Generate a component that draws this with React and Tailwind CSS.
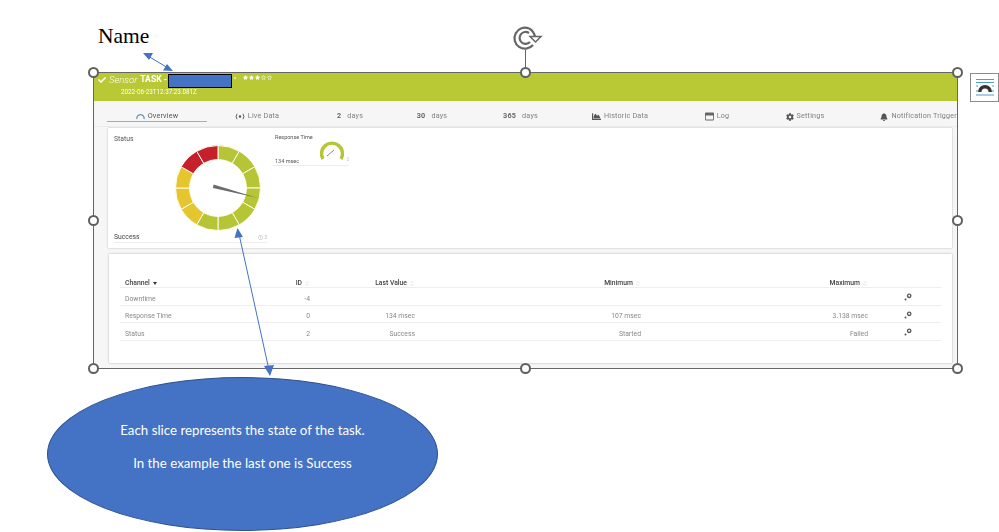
import { ChevronsUpDown } from "lucide-react";
import { FaBell, FaChartArea, FaCheck, FaCog, FaRegClock, FaRegWindowMaximize, FaStar, FaRegStar } from "react-icons/fa";

const tabs = [
  { w: "w-[100px]", label: "Overview", icon: "gauge", active: true },
  { w: "w-[100px]", label: "Live Data", icon: "live" },
  { w: "w-[86px]", num: "2", label: "days" },
  { w: "w-[78px]", num: "30", label: "days" },
  { w: "w-[99px]", num: "365", label: "days" },
  { w: "w-[100px]", label: "Historic Data", icon: "chart" },
  { w: "w-[94px]", label: "Log", icon: "log" },
  { w: "w-[82px]", label: "Settings", icon: "cog" },
  { w: "w-[111px] !justify-end", label: "Notification Trigger", icon: "bell" },
];

const rows = [
  ["Downtime", "-4", "", "", ""],
  ["Response Time", "0", "134 msec", "107 msec", "3.138 msec"],
  ["Status", "2", "Success", "Started", "Failed"],
];

const handles = [
  "left-[88px] top-[67px]",
  "left-[520px] top-[67px]",
  "left-[952px] top-[67px]",
  "left-[88px] top-[215px]",
  "left-[952px] top-[215px]",
  "left-[88px] top-[363px]",
  "left-[520px] top-[363px]",
  "left-[952px] top-[363px]",
];

function polar(cx, cy, r, deg) {
  const a = ((deg - 90) * Math.PI) / 180;
  return [cx + r * Math.cos(a), cy + r * Math.sin(a)];
}

function slicePath(cx, cy, r0, r1, from, to) {
  const [x1, y1] = polar(cx, cy, r1, from);
  const [x2, y2] = polar(cx, cy, r1, to);
  const [x3, y3] = polar(cx, cy, r0, to);
  const [x4, y4] = polar(cx, cy, r0, from);
  return `M${x1} ${y1}A${r1} ${r1} 0 0 1 ${x2} ${y2}L${x3} ${y3}A${r0} ${r0} 0 0 0 ${x4} ${y4}Z`;
}

function sliceColor(i) {
  if (i < 7) return "#b5c536";
  if (i < 10) return "#e6c62f";
  return "#c5202b";
}

function Donut() {
  return (
    <svg width="90" height="90" viewBox="0 0 90 90">
      {Array.from({ length: 12 }, (_, i) => (
        <path
          key={i}
          d={slicePath(45, 45, 28.5, 42.5, i * 30, (i + 1) * 30)}
          fill={sliceColor(i)}
          stroke="#fdfbe8"
          strokeWidth="1"
        />
      ))}
      <path d="M40.500 41.500L85 55L40 45Z" fill="#6b6b6b" />
    </svg>
  );
}

function MiniGauge() {
  return (
    <svg width="26" height="22" viewBox="0 0 26 22">
      <path d="M4 19A10.500 10.500 0 1 1 22 19" fill="none" stroke="#b5c536" strokeWidth="3.400" />
      <path d="M8 16L15 10" stroke="#8a8a8a" strokeWidth="1" />
    </svg>
  );
}

function RowGear() {
  return (
    <svg width="8" height="8" viewBox="0 0 8 8">
      <circle cx="5.200" cy="2.800" r="1.700" fill="none" stroke="#555" strokeWidth="1.300" />
      <circle cx="1.500" cy="6.500" r="1" fill="#555" />
    </svg>
  );
}

function TabIcon({ name }) {
  if (name === "gauge")
    return (
      <svg width="9" height="8" viewBox="0 0 9 8">
        <path d="M1 7A3.600 3.600 0 1 1 8 7" fill="none" stroke="#5b8db8" strokeWidth="1.200" />
      </svg>
    );
  if (name === "live")
    return (
      <svg width="10" height="7" viewBox="0 0 10 7">
        <path d="M2 .8Q.2 3.500 2 6.200M8 .8Q9.800 3.500 8 6.200" fill="none" stroke="#555" strokeWidth=".9" />
        <circle cx="5" cy="3.500" r="1.200" fill="#555" />
      </svg>
    );
  if (name === "chart") return <FaChartArea className="text-[9px] text-[#555]" />;
  if (name === "log") return <FaRegWindowMaximize className="text-[9px] text-[#666]" />;
  if (name === "cog") return <FaCog className="text-[8px] text-[#555]" />;
  if (name === "bell") return <FaBell className="text-[8px] text-[#555]" />;
  return null;
}

function Tab({ tab }) {
  return (
    <div
      className={`${tab.w} shrink-0 h-full flex items-center justify-center gap-[3px] text-[7.2px] tracking-[0.2px] text-[#808080] whitespace-nowrap ${
        tab.active ? "border-b border-[#8fb4d0]" : ""
      }`}
    >
      {tab.icon && <TabIcon name={tab.icon} />}
      {tab.num && <span className="font-bold text-[#666] mr-[3px]">{tab.num}</span>}
      <span className={tab.active ? "text-[#555]" : ""}>{tab.label}</span>
    </div>
  );
}

function HeaderCell({ children }) {
  return (
    <div className="flex items-center justify-end gap-[2px]">
      <span className="font-medium text-[#444]">{children}</span>
      <ChevronsUpDown className="w-[6px] h-[7px] text-[#bbb]" strokeWidth={1.5} />
    </div>
  );
}

function ChannelTable() {
  return (
    <div className="mx-[11px] mt-[19px] text-[6.8px] text-[#888]">
      <div className="grid grid-cols-[150px_35px_105px_226px_227px_73px] h-[15px] pt-[5px] items-center border-b border-[#eeeeee] pl-[5px]">
        <div className="font-medium text-[#444] flex items-center gap-[3px]">
          Channel
          <span className="w-0 h-0 border-x-[2px] border-x-transparent border-t-[3px] border-t-[#333]" />
        </div>
        <HeaderCell>ID</HeaderCell>
        <HeaderCell>Last Value</HeaderCell>
        <HeaderCell>Minimum</HeaderCell>
        <HeaderCell>Maximum</HeaderCell>
      </div>
      {rows.map((row) => (
        <div
          key={row[0]}
          className="grid grid-cols-[150px_35px_105px_226px_227px_73px] h-[17.6px] pt-[5px] items-center border-b border-[#eeeeee] pl-[5px]"
        >
          <div>{row[0]}</div>
          <div className="text-right">{row[1]}</div>
          <div className="text-right">{row[2]}</div>
          <div className="text-right">{row[3]}</div>
          <div className="text-right">{row[4]}</div>
          <div className="flex justify-end pr-[29px] -mt-[3px]">
            <RowGear />
          </div>
        </div>
      ))}
    </div>
  );
}

export default function App() {
  return (
    <div className="relative w-[999px] h-[532px] overflow-hidden bg-white font-['Roboto',sans-serif]">
      <div className="absolute left-[98px] top-[23px] font-['Liberation_Serif',serif] text-[21.5px] leading-[26px] text-black">
        Name
      </div>

      {/* inserted picture */}
      <div className="absolute left-[93px] top-[72px] w-[865px] h-[297px] border border-[#666] bg-[#f6f6f6] overflow-hidden flex flex-col">
        <div className="h-[28px] shrink-0 bg-[#b9c835] text-white flex items-start pl-[4px] blur-[0.3px]">
          <FaCheck className="text-[8px] mt-[3px]" />
          <div className="ml-[3px]">
            <div className="flex items-start h-[13px] text-[9.5px] leading-[13px]">
              <span className="italic font-light">Sensor</span>
              <span className="font-bold text-[8.6px] ml-[3px]">TASK -</span>
              <div className="ml-[67px] mt-[2px] flex items-center gap-[1px] text-[5px]">
                <span className="w-[2px] h-[2px] rounded-full border-[0.5px] border-white mr-[6px]" />
                <FaStar />
                <FaStar />
                <FaStar />
                <FaRegStar />
                <FaRegStar />
              </div>
            </div>
            <div className="ml-[12px] mt-[2px] text-[6.3px] leading-[8px]">2022-06-23T12:37:23.081Z</div>
          </div>
        </div>

        <div className="h-[26px] shrink-0 flex items-stretch pl-[13px] pt-[10px] pb-[4px] border-b border-[#ececec] blur-[0.25px]">
          {tabs.map((tab) => (
            <Tab key={tab.label + (tab.num || "")} tab={tab} />
          ))}
        </div>

        <div className="ml-[14px] mr-[5px] mt-[1px] h-[120px] shrink-0 bg-white shadow-[0_0_2px_rgba(0,0,0,0.25)] flex pl-[6px] text-[6.8px] text-[#555]">
          <div className="w-[153px] grid blur-[0.25px]">
            <div className="col-start-1 row-start-1 flex flex-col justify-between pt-[6px] pb-[5px]">
              <div>Status</div>
              <div className="flex justify-between items-center border-b border-[#eeeeee] leading-[8px] pb-[1px]">
                <span className="text-[#444]">Success</span>
                <span className="flex items-center gap-[1px] text-[5px] text-[#bbb]">
                  <FaRegClock /> 3
                </span>
              </div>
            </div>
            <div className="col-start-1 row-start-1 ml-[59px] mt-[15px]">
              <Donut />
            </div>
          </div>
          <div className="ml-[5px] w-[77px] h-[31px] mt-[7px] border-b border-[#eeeeee] flex flex-col justify-between blur-[0.25px]">
            <div className="pl-[3px] text-[5.5px] leading-[5px]">Response Time</div>
            <div className="flex justify-between items-end pl-[3px]">
              <span className="text-[5.5px] leading-[7px]">134 msec</span>
              <div className="flex items-end mb-[3px]">
                <MiniGauge />
                <span className="text-[4.5px] leading-[5px] text-[#bbb] ml-[1px]">3</span>
              </div>
            </div>
          </div>
        </div>

        <div className="ml-[15px] mr-[5px] mt-[6px] h-[109px] shrink-0 bg-white shadow-[0_0_2px_rgba(0,0,0,0.3)] blur-[0.25px]">
          <ChannelTable />
        </div>
      </div>

      {/* redacted name */}
      <div className="absolute left-[168px] top-[74px] w-[64px] h-[14px] bg-[#4472c4] border border-black" />

      {/* arrows, stem and rotate handle */}
      <svg className="absolute left-0 top-0 pointer-events-none" width="999" height="532" viewBox="0 0 999 532">
        <path d="M148 56L168 68" stroke="#4472c4" strokeWidth="1" />
        <path d="M143 53L153 53L149 60Z" fill="#4472c4" />
        <path d="M173 71L163 70.500L167 64Z" fill="#4472c4" />
        <path d="M239 234L269 370" stroke="#4472c4" strokeWidth="1" />
        <path d="M237.500 228L243 237L234.500 238Z" fill="#4472c4" />
        <path d="M270 376L264 366L274 365Z" fill="#4472c4" />
        <path d="M525.500 50V67" stroke="#666" strokeWidth="1" />
        <path d="M529 28.500A10.500 10.500 0 1 0 533 45" fill="none" stroke="#666" strokeWidth="2.200" />
        <path d="M529 33A6 6 0 1 0 530 42" fill="none" stroke="#666" strokeWidth="2.200" />
        <path d="M529 28.500Q534 31 535 37" fill="none" stroke="#666" strokeWidth="2.200" />
        <path d="M530 36.500H541L535.500 42Z" fill="white" stroke="#666" strokeWidth="1.500" />
      </svg>

      {handles.map((pos) => (
        <div key={pos} className={`absolute ${pos} w-[11px] h-[11px] rounded-full bg-white border-2 border-[#5f5f5f]`} />
      ))}

      {/* layout options button */}
      <div className="absolute left-[970px] top-[73px] w-[29px] h-[29px] bg-white border border-[#8c8c8c] flex items-center justify-center">
        <svg width="20" height="20" viewBox="0 0 20 20">
          <path d="M1 1.500H19M1 4.500H19M1 17H19" stroke="#4f9cc4" strokeWidth="1" />
          <path d="M1 8H3M17 8H19M1 13H3M17 13H19" stroke="#4f9cc4" strokeWidth="1" />
          <path d="M3 14A7 7 0 0 1 17 14H13.500A3.500 3.500 0 0 0 6.500 14Z" fill="#333" />
        </svg>
      </div>

      {/* callout */}
      <div className="absolute left-[47px] top-[377px] w-[391px] h-[154px] rounded-[50%] bg-[#4472c4] border border-[#2f528f] flex flex-col items-center gap-[17px] pt-[44px] font-['Lato',sans-serif] text-[13.3px] leading-[16px] text-white">
        <div>Each slice represents the state of the task.</div>
        <div>In the example the last one is Success</div>
      </div>
    </div>
  );
}
